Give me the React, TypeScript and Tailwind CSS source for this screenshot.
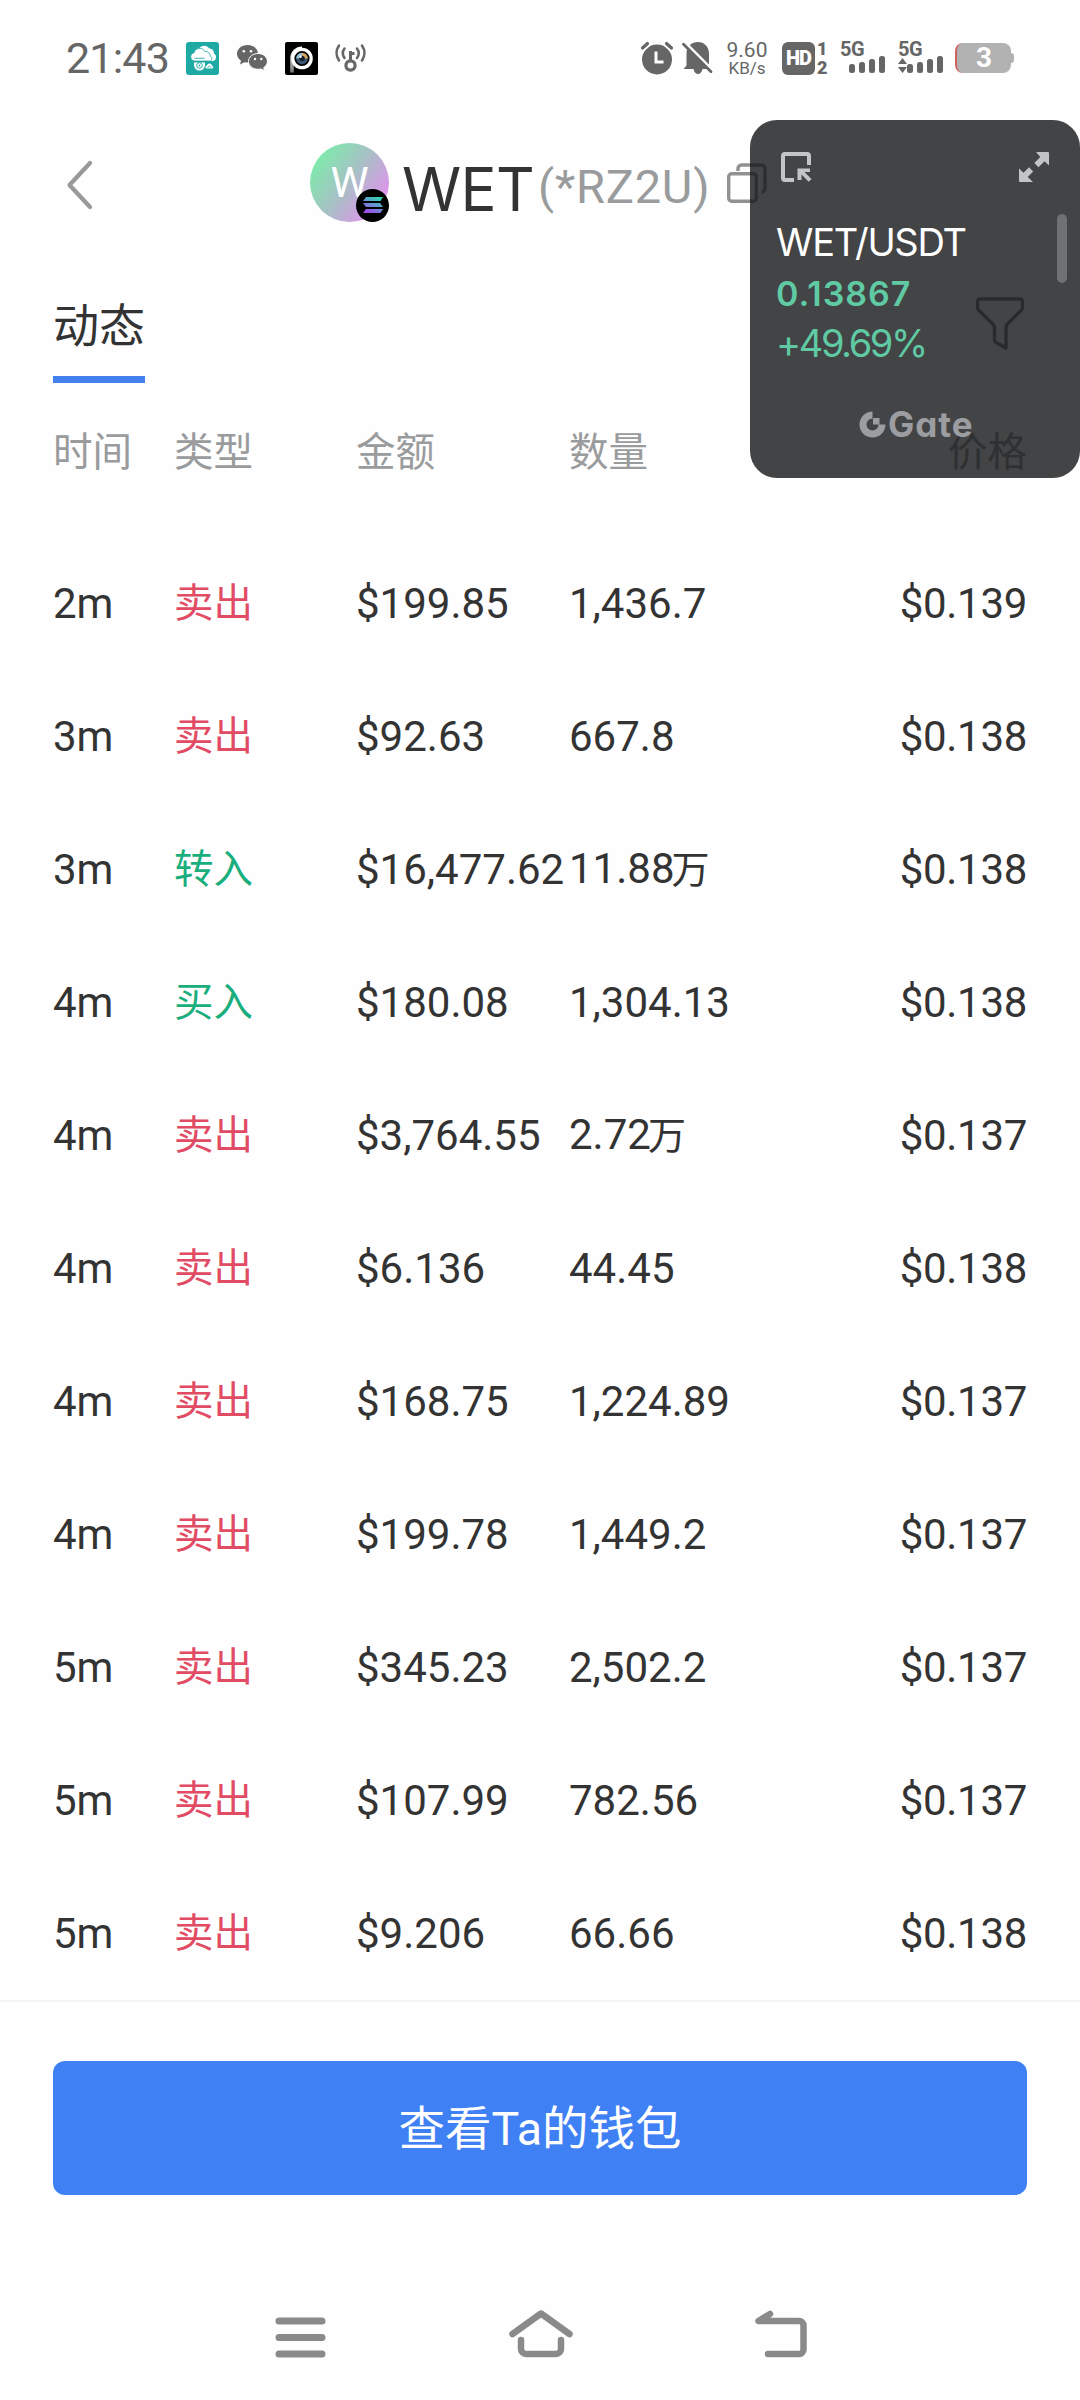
import React from 'react';

interface Trade {
  id: number;
  time: string;
  type: string;
  amount: string;
  quantity: string;
  unit?: string;
  price: string;
}

const trades: Trade[] = [
  { id: 1, time: '2m', type: '卖出', amount: '$199.85', quantity: '1,436.7', price: '$0.139' },
  { id: 2, time: '3m', type: '卖出', amount: '$92.63', quantity: '667.8', price: '$0.138' },
  { id: 3, time: '3m', type: '转入', amount: '$16,477.62', quantity: '11.88', unit: '万', price: '$0.138' },
  { id: 4, time: '4m', type: '买入', amount: '$180.08', quantity: '1,304.13', price: '$0.138' },
  { id: 5, time: '4m', type: '卖出', amount: '$3,764.55', quantity: '2.72', unit: '万', price: '$0.137' },
  { id: 6, time: '4m', type: '卖出', amount: '$6.136', quantity: '44.45', price: '$0.138' },
  { id: 7, time: '4m', type: '卖出', amount: '$168.75', quantity: '1,224.89', price: '$0.137' },
  { id: 8, time: '4m', type: '卖出', amount: '$199.78', quantity: '1,449.2', price: '$0.137' },
  { id: 9, time: '5m', type: '卖出', amount: '$345.23', quantity: '2,502.2', price: '$0.137' },
  { id: 10, time: '5m', type: '卖出', amount: '$107.99', quantity: '782.56', price: '$0.137' },
  { id: 11, time: '5m', type: '卖出', amount: '$9.206', quantity: '66.66', price: '$0.138' },
];

function SignalBars() {
  return (
    <div className="flex items-end gap-[4px]">
      {[9, 11, 14, 17].map((h) => (
        <div key={h} className="w-[6px] rounded-[2.5px] bg-[#666]" style={{ height: h }} />
      ))}
    </div>
  );
}

function StatusBar() {
  return (
    <div className="flex h-[116px] w-full items-center pl-[66px] text-[#666]">
      <span className="w-[120px] text-[43px] leading-none tracking-[-0.8px]">21:43</span>

      {/* Weather app */}
      <svg width="33" height="33" viewBox="0 0 33 33">
        <rect width="33" height="33" rx="3" fill="#1ea9a4" />
        <path d="M12 8.500a6.500 6.500 0 0 1 11.500-2a5 5 0 0 1 4.500 5a4 4 0 0 1-1 7.500h-8z" fill="#fff" />
        <path d="M8.500 19a4.200 4.200 0 0 1-.5-8.300a5.800 5.800 0 0 1 10.800-1.200a4.800 4.800 0 0 1 5.500 4.800a2.500 2.500 0 0 1 0 4.700z" fill="#fff" stroke="#1ea9a4" strokeWidth="0.8" />
        <path d="M8.500 16.300h10" stroke="#1ea9a4" strokeWidth="0.9" />
        <path d="M8 20.500h11v2.500a5.500 5.500 0 0 1-11 0z" fill="#fff" />
        <circle cx="13.500" cy="23.500" r="2.800" fill="none" stroke="#1ea9a4" strokeWidth="1" />
        <circle cx="13.500" cy="23.500" r="0.900" fill="#1ea9a4" />
        <path d="M20 26.500a2 2 0 0 1 1-3.200a2.600 2.600 0 0 1 5 .4a1.500 1.500 0 0 1 .5 2.800z" fill="#fff" />
        <path d="M21.500 25.800l2-1.800l1.800 1.800" fill="none" stroke="#1ea9a4" strokeWidth="0.900" />
      </svg>

      {/* WeChat */}
      <svg className="ml-[17px]" width="32" height="28" viewBox="0 0 32 28">
        <path d="M11.500 1C5.500 1 1 5 1 9.800c0 2.900 1.500 5.300 4 6.900L4 20.500l4.300-2.300c1.100.3 2.200.4 3.200.4C17.500 18.600 22 14.600 22 9.800S17.500 1 11.500 1z" fill="#666" />
        <path d="M22 9.500c-5.300 0-9.500 3.500-9.500 7.900s4.200 7.900 9.500 7.900c1 0 2-.1 3-.4l3.600 1.900-.9-3.200c2.200-1.400 3.700-3.600 3.700-6.200 0-4.400-4.100-7.900-9.400-7.900z" fill="#666" stroke="#fff" strokeWidth="1" />
        <circle cx="7.800" cy="7.200" r="1.300" fill="#fff" />
        <circle cx="15" cy="7.200" r="1.300" fill="#fff" />
        <circle cx="19" cy="15" r="1.200" fill="#fff" />
        <circle cx="25.300" cy="15" r="1.200" fill="#fff" />
      </svg>

      {/* Photo editor */}
      <svg className="ml-[17px]" width="33" height="33" viewBox="0 0 33 33">
        <defs>
          <linearGradient id="pstem" x1="0" y1="0" x2="0" y2="1">
            <stop offset="0" stopColor="#fff" />
            <stop offset="1" stopColor="#777" />
          </linearGradient>
        </defs>
        <rect width="33" height="33" rx="2" fill="#000" />
        <path d="M7 30.500V16a10 10 0 0 1 10-9.800" fill="none" stroke="url(#pstem)" strokeWidth="3.600" />
        <circle cx="17" cy="16.500" r="9.200" fill="none" stroke="#fff" strokeWidth="3.200" />
        <circle cx="17" cy="16.500" r="5.800" fill="#3a5670" />
        <path d="M17 10.700a5.800 5.800 0 0 1 5.800 5.800h-5.800z" fill="#d9a75c" />
        <path d="M11.200 16.500a5.800 5.800 0 0 1 5.800-5.800v5.800z" fill="#93bfd8" />
        <circle cx="17" cy="16.500" r="2.800" fill="#15202c" />
        <circle cx="15.500" cy="14.800" r="1.200" fill="#fff" />
      </svg>

      {/* Hotspot key */}
      <svg className="ml-[15px]" width="36" height="32" viewBox="0 0 36 32" fill="none" stroke="#666" strokeWidth="2.600" strokeLinecap="round">
        <path d="M6 3.500a13 13 0 0 0 0 15M11.500 6.500a8 8 0 0 0 0 9.500M29 3.500a13 13 0 0 1 0 15M24 6.500a8 8 0 0 1 0 9.500" />
        <circle cx="17.500" cy="23.500" r="4.600" strokeWidth="3.200" />
        <path d="M17.500 18.500V9M18 11.500h3.500" strokeWidth="3" strokeLinecap="butt" />
      </svg>

      {/* Alarm */}
      <svg className="ml-[271px]" width="34" height="34" viewBox="0 0 34 34">
        <circle cx="17" cy="18.500" r="15" fill="#666" />
        <path d="M2.500 7.500l5-4.500M31.500 7.500l-5-4.500" stroke="#fff" strokeWidth="6" />
        <path d="M2.500 7l5-4.500M31.500 7l-5-4.500" stroke="#666" strokeWidth="3.200" strokeLinecap="round" />
        <path d="M16 10.500v10.500h7.500" fill="none" stroke="#fff" strokeWidth="3" />
      </svg>
      {/* Muted bell */}
      <svg className="ml-[8px]" width="32" height="34" viewBox="0 0 32 34">
        <path d="M16 1c-6.500 0-11.500 4.500-11.500 11.500v12L1.500 28h10c.7 3.300 2.500 5 4.500 5s3.800-1.700 4.500-5h6.500V12.500C27 5.500 22 1 16 1z" fill="#666" />
        <path d="M2.500 1l29 29" stroke="#fff" strokeWidth="3" />
        <path d="M1.500 3.200L29 30.700" stroke="#666" strokeWidth="2.700" strokeLinecap="round" />
      </svg>

      <div className="ml-[10px] mt-[1px] flex w-[46px] flex-col items-center">
        <span className="text-[21px] leading-[20px]">9.60</span>
        <span className="text-[17px] leading-[17px]">KB/s</span>
      </div>

      <div className="ml-[12px] flex h-[33px] w-[33px] items-center justify-center rounded-[6px] bg-[#666] text-[20px] font-black leading-none tracking-[-1px] text-white">HD</div>
      <div className="ml-[2px] flex w-[12px] flex-col text-[18px] font-black leading-[19px]">
        <span>1</span>
        <span>2</span>
      </div>

      <div className="ml-[11px] flex h-[36px] w-[45px] flex-col">
        <span className="h-[16px] text-[20px] font-bold leading-[19px] tracking-[-0.5px]">5G</span>
        <div className="flex h-[17px] items-end pl-[9px]">
          <SignalBars />
        </div>
      </div>
      <div className="ml-[13px] flex h-[36px] w-[45px] flex-col">
        <span className="h-[16px] text-[20px] font-bold leading-[19px] tracking-[-0.5px]">5G</span>
        <div className="flex h-[17px] items-end">
          <svg width="9" height="15" viewBox="0 0 9 15" fill="#666">
            <path d="M4.500 0l4.500 6H0zM4.500 15l4.500-6H0z" />
          </svg>
          <SignalBars />
        </div>
      </div>

      <div className="ml-[12px] flex items-center">
        <div className="flex h-[30px] w-[56px] items-center justify-center rounded-[8px] border-l-[2px] border-l-[#d0605c] bg-[#b2b2b2] text-[28px] font-bold leading-[30px] text-white">3</div>
        <div className="h-[10px] w-[3px] rounded-r-[3px] bg-[#b2b2b2]" />
      </div>
    </div>
  );
}

function TokenHeader() {
  return (
    <div className="flex h-[132px] items-center pl-[65px]">
      <svg className="mt-[5px]" width="30" height="52" viewBox="0 0 30 52" fill="none" stroke="#999" strokeWidth="4.200" strokeLinecap="round" strokeLinejoin="round">
        <path d="M25 4L4.500 26L25 48" />
      </svg>

      <div className="relative ml-[215px] h-[79px] w-[79px] shrink-0">
        <div className="flex h-full w-full items-center justify-center rounded-full bg-[linear-gradient(125deg,#78f0a8_8%,#a9bfc6_50%,#e88df2_90%)] text-[43px] leading-none text-white">W</div>
        <div className="absolute right-0 bottom-0 flex h-[33px] w-[33px] items-center justify-center rounded-full bg-black">
          <svg width="20" height="16" viewBox="0 0 20 16">
            <defs>
              <linearGradient id="sol" x1="0.800" y1="0" x2="0.200" y2="1">
                <stop offset="0" stopColor="#2fd9b0" />
                <stop offset="0.500" stopColor="#6a8fd0" />
                <stop offset="1" stopColor="#a344ee" />
              </linearGradient>
            </defs>
            <path d="M3 0H20l-2.500 4H0zM0 6h17L20 10H3zM3 12H20l-2.500 4H0z" fill="url(#sol)" />
          </svg>
        </div>
      </div>

      <div className="ml-[13px] mt-[10px] flex items-center">
        <span className="mt-[3px] w-[136px] font-['Inter',sans-serif] text-[60px] leading-[66px] tracking-[-0.6px] text-[#333]">WET</span>
        <span className="text-[47px] leading-[66px] tracking-[0.8px] text-[#999b9d]">(*RZ2U)</span>
      </div>

      <svg className="ml-[16px] mt-[2px]" width="42" height="42" viewBox="0 0 42 42" fill="none" stroke="#8f9193" strokeWidth="3.400">
        <rect x="2.700" y="11.700" width="27.600" height="27.600" rx="3" />
        <path d="M12 9V6.500a3.500 3.500 0 0 1 3.500-3.500h20a3.500 3.500 0 0 1 3.500 3.500v20a3.500 3.500 0 0 1-3.500 3.500" />
      </svg>
    </div>
  );
}

function PriceWidget() {
  return (
    <div className="absolute top-[120px] left-[750px] h-[358px] w-[330px] rounded-[27px] bg-[rgba(20,21,22,0.8)] font-['Inter','Liberation_Sans',sans-serif]">
      <div className="flex justify-between pt-[31px] pr-[30px] pl-[30px]">
        <svg width="32" height="32" viewBox="0 0 32 32">
          <path d="M14 29H5a2 2 0 0 1-2-2V5a2 2 0 0 1 2-2h22a2 2 0 0 1 2 2v9" fill="none" stroke="#c3c4c5" strokeWidth="4" />
          <path d="M17.500 17.500h12.500v3.500h-5.500l7 7-2.800 2.800-7.200-7.200v5.500h-4z" fill="#c3c4c5" />
        </svg>
        <svg width="32" height="32" viewBox="0 0 32 32" fill="#c3c4c5">
          <path d="M18 1h12a1 1 0 0 1 1 1v12.500l-4.500-4.300-6 6-4.200-4.200 6-6zM1 17.500l4.500 4.300 5.500-5.500 4.200 4.200-5.500 5.500 5.300 5h-13a1 1 0 0 1-1-1z" />
        </svg>
      </div>
      <div className="flex justify-between pt-[31px] pr-[13px] pl-[26px]">
        <div className="flex flex-col whitespace-nowrap pt-[1px]">
          <span className="text-[38px] leading-[54px] font-normal tracking-[-1.3px] text-white">WET/USDT</span>
          <span className="text-[34px] leading-[50px] font-semibold tracking-[1px] text-[#5fcaa3]">0.13867</span>
          <span className="text-[38px] leading-[48px] font-normal tracking-[-2.4px] text-[#5fcaa3]">+49.69%</span>
        </div>
        <div className="h-[69px] w-[10px] rounded-full bg-[#707175]" />
      </div>
      <div className="flex items-center pt-[37px] pl-[109px] text-[#9b9da0]">
        <svg width="27" height="27" viewBox="0 0 27 27">
          <path d="M13.500 4a9.500 9.500 0 1 0 9.500 9.500" fill="none" stroke="#9b9da0" strokeWidth="7" />
          <rect x="14" y="7" width="6.500" height="6.500" fill="#9b9da0" />
        </svg>
        <span className="ml-[2px] text-[35px] leading-[40px] font-bold tracking-[1px] [font-feature-settings:'cv11']">Gate</span>
      </div>
    </div>
  );
}

function TradeTable() {
  return (
    <div className="px-[53px]">
      <div className="grid h-[152px] grid-cols-[121px_182px_213px_1fr] pt-[38px] text-[39.5px] leading-[60px] text-[#999b9d]">
        <span>时间</span>
        <span>类型</span>
        <span>金额</span>
        <span className="flex justify-between">
          数量<span>价格</span>
        </span>
      </div>
      {trades.map((trade) => (
        <div
          key={trade.id}
          className="grid h-[133px] grid-cols-[121px_182px_213px_1fr_auto] items-center text-[42px] leading-[50px] text-[#333]"
        >
          <span>{trade.time}</span>
          <span className={`text-[39.5px] ${trade.type === '卖出' ? 'text-[#e14b64]' : 'text-[#1aae7d]'}`}>
            {trade.type}
          </span>
          <span>{trade.amount}</span>
          <span>
            {trade.quantity}
            {trade.unit && <span className="-ml-[3px] text-[38px]">{trade.unit}</span>}
          </span>
          <span className="tracking-[-0.3px]">{trade.price}</span>
        </div>
      ))}
    </div>
  );
}

function NavigationBar() {
  return (
    <div className="flex h-[60px] items-center justify-between pr-[270px] pl-[272px]">
      <svg width="56" height="56" viewBox="0 0 56 56" stroke="#8a8a8a" strokeWidth="7" strokeLinecap="round">
        <path d="M7 12h43M7 28.500h43M7 45h43" />
      </svg>
      <svg width="70" height="56" viewBox="0 0 70 56" fill="none" stroke="#8a8a8a" strokeWidth="6.500" strokeLinecap="round" strokeLinejoin="round">
        <path d="M6.500 25L35 4.500L63.500 25M15 31v9a5 5 0 0 0 5 5h30a5 5 0 0 0 5-5v-9" />
      </svg>
      <svg width="56" height="56" viewBox="0 0 56 56" fill="none" stroke="#8a8a8a" strokeWidth="6.500" strokeLinecap="round" strokeLinejoin="round">
        <path d="M16 5L4.500 12H45a4.500 4.500 0 0 1 4.500 4.500v24a4.500 4.500 0 0 1-4.500 4.500H14" />
      </svg>
    </div>
  );
}

export default function App() {
  return (
    <div className="relative h-[2400px] w-[1080px] overflow-hidden bg-[#fefefe] font-['Roboto','Noto_Sans_CJK_SC',sans-serif]">
      <StatusBar />
      <TokenHeader />

      {/* Tab and filter */}
      <div className="flex h-[137px] items-start justify-between pr-[55px] pl-[53px] pt-[45px]">
        <div className="flex flex-col">
          <span className="h-[83px] text-[46px] leading-[66px] text-[#333]">动态</span>
          <div className="h-[7px] w-[92px] bg-[#4480ee]" />
        </div>
        <svg className="mt-[2px]" width="50" height="58" viewBox="0 0 50 58" fill="none" stroke="#7a7c7e" strokeWidth="3.400" strokeLinejoin="round">
          <path d="M5 4h40a2.500 2.500 0 0 1 2.500 2.500v5.500a5 5 0 0 1-1.500 3.500L32 29.500a4 4 0 0 0-1 2.700V53L21 47.500a3 3 0 0 1-1.500-2.600V32.500a4 4 0 0 0-1-2.700L4 15.500A5 5 0 0 1 2.500 12V6.500A2.500 2.500 0 0 1 5 4z" />
        </svg>
      </div>

      <TradeTable />

      {/* Footer action */}
      <div className="border-t-2 border-[#f4f4f4] px-[53px] pt-[59px]">
        <button className="flex h-[134px] w-full items-center justify-center rounded-[12px] bg-[#4080f5] pt-[2px] text-[46.5px] leading-none text-white">
          查看Ta的钱包
        </button>
      </div>
      <div className="pt-[112px]">
        <NavigationBar />
      </div>

      <PriceWidget />
    </div>
  );
}
